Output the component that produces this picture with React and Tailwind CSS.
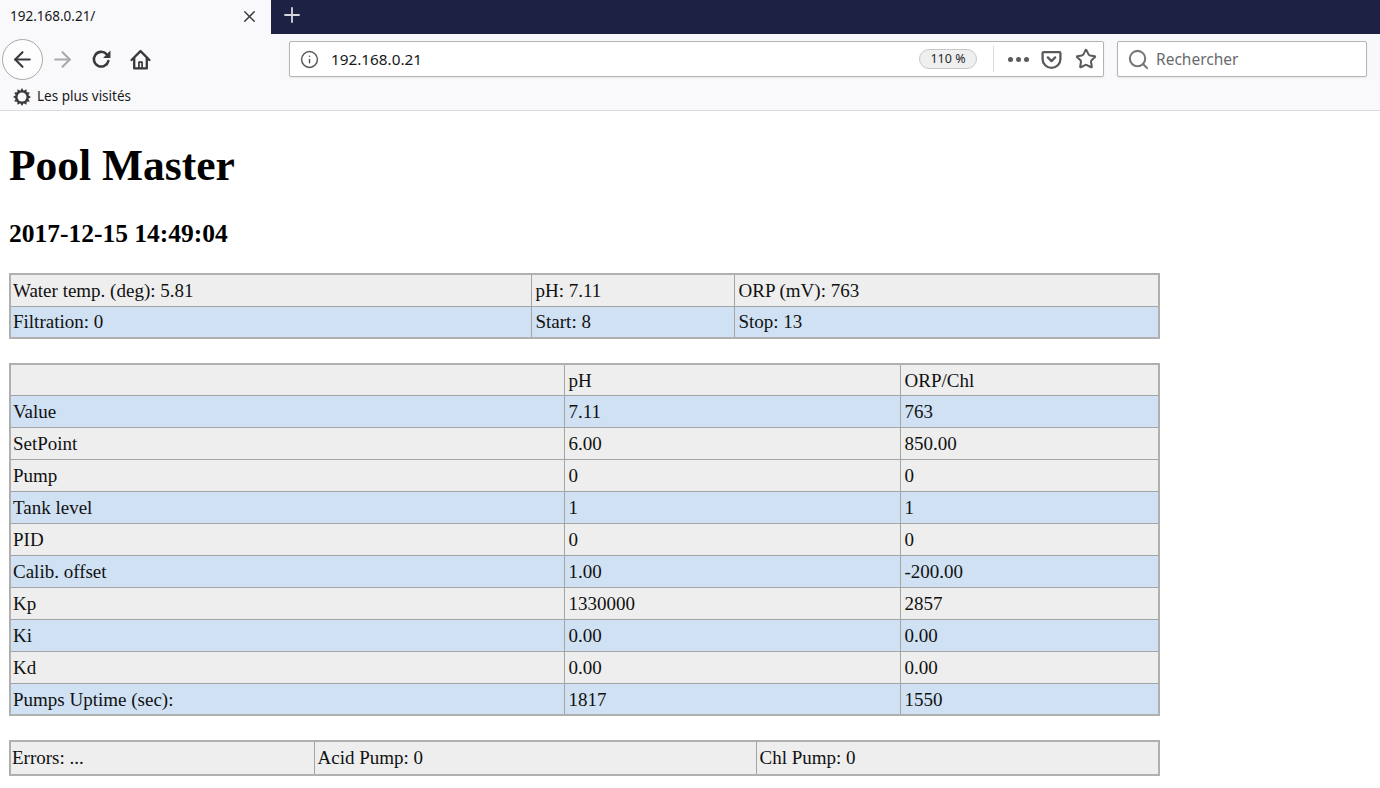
import { ArrowLeft, ArrowRight, Info, Star, Search, X, Plus } from "lucide-react";

const serif = { fontFamily: '"Liberation Serif", serif' };

function HomeIcon() {
  return (
    <svg viewBox="0 0 20 20" className="h-[21px] w-[21px]" fill="none" stroke="#38383d" strokeWidth="2.200" strokeLinejoin="round">
      <path d="M1.500 10.500 10 2l8.500 8.500" strokeLinecap="round" />
      <path d="M4 8v10.500h12V8" />
      <path d="M8.500 18v-5.500h3V18" strokeWidth="1.600" />
    </svg>
  );
}

function ReloadIcon() {
  return (
    <svg viewBox="0 0 20 20" className="h-[21px] w-[21px]" fill="none" stroke="#38383d" strokeWidth="2.400" strokeLinecap="round">
      <path d="M16.500 11.500A7 7 0 1 1 14.800 4.900" />
      <path d="M18.500 1.500v7h-7z" fill="#38383d" stroke="none" />
    </svg>
  );
}

function GearIcon() {
  return (
    <svg viewBox="0 0 16 16" className="h-[18px] w-[18px]" fill="#38383d">
      <path d="M8 0l1.500 2.400L12 1.100l.2 2.700 2.700.2-1.300 2.500L16 8l-2.400 1.500 1.300 2.500-2.700.2-.2 2.700-2.500-1.300L8 16l-1.500-2.400L4 14.900l-.2-2.700-2.700-.2 1.300-2.500L0 8l2.400-1.500L1.100 4l2.700-.2L4 1.100l2.500 1.300z" />
      <circle cx="8" cy="8" r="4" fill="#f9f9fa" />
    </svg>
  );
}

function PocketIcon() {
  return (
    <svg viewBox="0 0 20 20" className="h-[21px] w-[21px]" fill="none" stroke="#5a5a5e" strokeWidth="2.200" strokeLinecap="round" strokeLinejoin="round">
      <path d="M2.500 3h15a1 1 0 0 1 1 1v5.500a8.500 8.500 0 0 1-17 0V4a1 1 0 0 1 1-1z" />
      <path d="M6.500 8 10 11.500 13.500 8" />
    </svg>
  );
}

function DataTable({ widths, rows, blue, rowClass, cellClass, className }) {
  return (
    <table style={serif} className={"w-[1149px] table-fixed border-collapse border-2 border-[#b0b0b0] text-[19px] text-[#111111] " + className}>
      <colgroup>
        {widths.map((w, i) => (
          <col key={i} style={{ width: w }} />
        ))}
      </colgroup>
      <tbody>
        {rows.map((row, i) => (
          <tr key={i} className={rowClass + " " + (blue.includes(i) ? "bg-[#cfe1f3]" : "bg-[#eeeeee]")}>
            {row.map((cell, j) => (
              <td key={j} className={"border border-[#a4a4a4] leading-5 " + cellClass}>
                {cell}
              </td>
            ))}
          </tr>
        ))}
      </tbody>
    </table>
  );
}

const statusRows = [
  ["Water temp. (deg): 5.81", "pH: 7.11", "ORP (mV): 763"],
  ["Filtration: 0", "Start: 8", "Stop: 13"],
];

const mainRows = [
  ["", "pH", "ORP/Chl"],
  ["Value", "7.11", "763"],
  ["SetPoint", "6.00", "850.00"],
  ["Pump", "0", "0"],
  ["Tank level", "1", "1"],
  ["PID", "0", "0"],
  ["Calib. offset", "1.00", "-200.00"],
  ["Kp", "1330000", "2857"],
  ["Ki", "0.00", "0.00"],
  ["Kd", "0.00", "0.00"],
  ["Pumps Uptime (sec):", "1817", "1550"],
];

const errorRows = [["Errors: ...", "Acid Pump: 0", "Chl Pump: 0"]];

export default function App() {
  return (
    <div className="h-[788px] w-[1380px] overflow-hidden bg-white">
      <div style={{ fontFamily: '"Noto Sans", sans-serif' }} className="border-b border-[#dcdcde] bg-[#f9f9fb]">
        <div className="flex h-[34px] bg-[#1d2144]">
          <div className="flex h-[34px] w-[271px] items-center justify-between bg-[#f9f9fb] pb-[1px] pl-[10px] pr-[12px] text-[13.500px] text-[#18181a]">
            <span>192.168.0.21/</span>
            <X className="h-[19px] w-[19px] text-[#38383d]" strokeWidth={1.800} />
          </div>
          <div className="flex w-[42px] items-center justify-center pb-[4px]">
            <Plus className="h-[24px] w-[24px] text-[#d8d8e0]" strokeWidth={1.800} />
          </div>
        </div>

        <div className="flex h-[49px] items-center pl-[2px] pt-[1px]">
          <div className="flex h-[41px] w-[41px] items-center justify-center rounded-full border border-[#a8a8ac] bg-[#fdfdfe]">
            <ArrowLeft className="h-[25px] w-[25px] text-[#38383d]" strokeWidth={2} />
          </div>
          <ArrowRight className="ml-[7px] h-[25px] w-[25px] text-[#a9a9ac]" strokeWidth={2} />
          <div className="ml-[16px]">
            <ReloadIcon />
          </div>
          <div className="ml-[18px]">
            <HomeIcon />
          </div>

          <div className="ml-[138px] flex h-[36px] w-[815px] items-center rounded-[2px] border border-[#b4b4b6] bg-white pl-[10px] pr-[6px] shadow-[0_1px_2px_rgba(0,0,0,0.08)]">
            <Info className="h-[19px] w-[19px] text-[#55555a]" strokeWidth={1.800} />
            <span className="ml-[12px] flex-1 pt-[1px] text-[15.300px] text-[#18181a]">192.168.0.21</span>
            <span className="flex h-[20px] w-[58px] items-center justify-center rounded-full border border-[#c8c8ca] bg-[#efeff0] text-[12.500px] text-[#28282c]">
              110 %
            </span>
            <div className="ml-[16px] h-[26px] w-px bg-[#dcdcde]" />
            <div className="ml-[14px] flex gap-[3px]">
              <span className="h-[5px] w-[5px] rounded-full bg-[#5a5a5e]" />
              <span className="h-[5px] w-[5px] rounded-full bg-[#5a5a5e]" />
              <span className="h-[5px] w-[5px] rounded-full bg-[#5a5a5e]" />
            </div>
            <div className="ml-[12px]">
              <PocketIcon />
            </div>
            <Star className="ml-[13px] h-[22px] w-[22px] text-[#5a5a5e]" strokeWidth={2.200} />
          </div>

          <div className="ml-[13px] flex h-[36px] w-[250px] items-center rounded-[2px] border border-[#b4b4b6] bg-white pl-[9px] shadow-[0_1px_2px_rgba(0,0,0,0.08)]">
            <Search className="h-[23px] w-[23px] text-[#77777b]" strokeWidth={2.200} />
            <span className="ml-[6px] pt-[2px] text-[15.500px] text-[#6a6a6e]">Rechercher</span>
          </div>
        </div>

        <div className="flex h-[27px] items-center pl-[13px] text-[13.500px] text-[#18181a]">
          <GearIcon />
          <span className="ml-[6px]">Les plus visités</span>
        </div>
      </div>

      <div style={serif} className="pl-[9px] text-black">
        <h1 className="pt-[28px] text-[43.500px] font-bold leading-[52px]">Pool Master</h1>
        <h2 className="mt-[28px] text-[25.500px] font-bold leading-[30px]">2017-12-15 14:49:04</h2>
        <DataTable className="mt-[24px]" rowClass="h-[32px]" cellClass="px-[4px] pb-0 pt-[1px] first:pl-[2px]" widths={[521, 203, 425]} blue={[1]} rows={statusRows} />
        <DataTable className="mt-[24px]" rowClass="h-[31.950px]" cellClass="px-[4px] pb-0 pt-[1px] first:pl-[2px]" widths={[554, 336, 259]} blue={[1, 4, 6, 8, 10]} rows={mainRows} />
        <DataTable className="mt-[23.500px]" rowClass="h-[34px]" cellClass="px-[3px] py-0 first:pl-[1px]" widths={[304, 442, 403]} blue={[]} rows={errorRows} />
      </div>
    </div>
  );
}
